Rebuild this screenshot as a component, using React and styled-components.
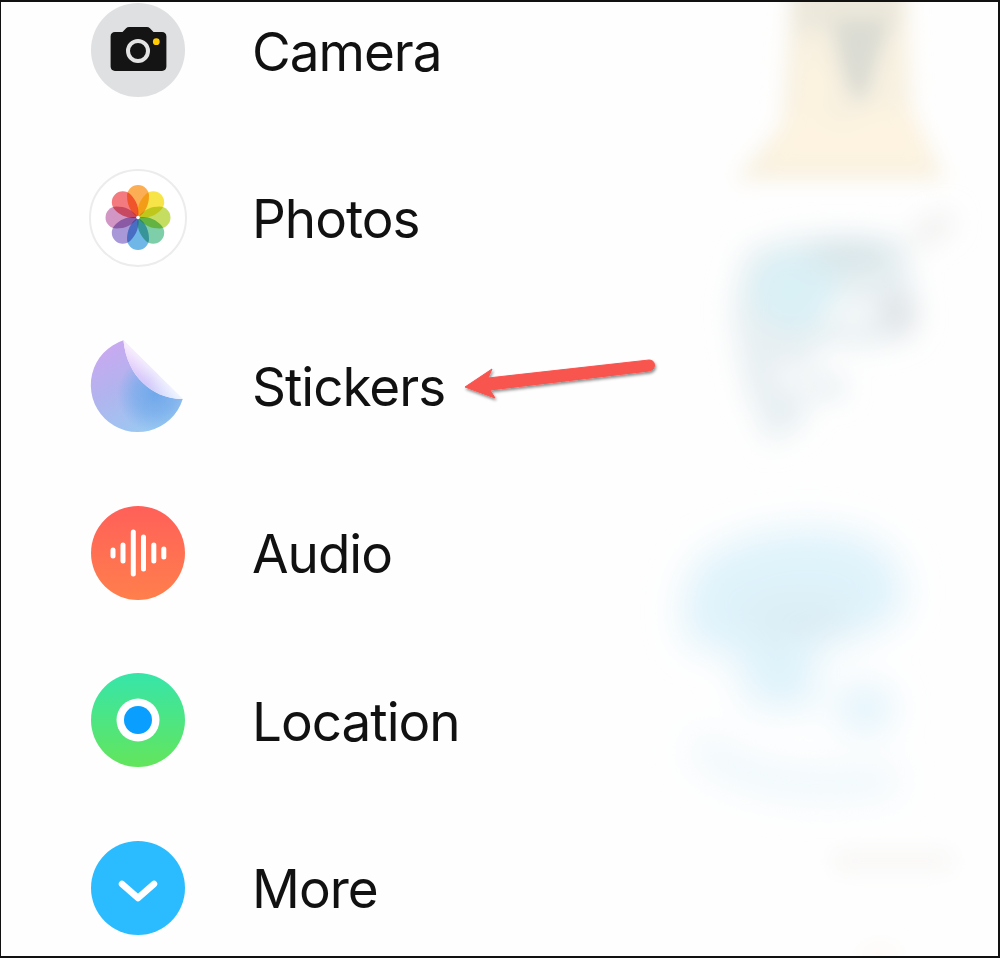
import React from 'react';
import styled, { createGlobalStyle } from 'styled-components';

const Global = createGlobalStyle`
  html, body {
    margin: 0;
    padding: 0;
    background: #fff;
  }
`;

const Frame = styled.div`
  position: relative;
  box-sizing: border-box;
  width: 1000px;
  height: 958px;
  overflow: hidden;
  background: #fefefe;
  border: solid #111;
  border-width: 2px 2px 2px 1px;
`;

const Overlay = styled.svg`
  position: absolute;
  top: -2px;
  left: -1px;
  width: 1000px;
  height: 958px;
`;

const List = styled.ul`
  position: relative;
  list-style: none;
  margin: 0;
  padding: 1px 0 0 90px;
  display: flex;
  flex-direction: column;
  gap: 73.6px;
`;

const Row = styled.li`
  display: flex;
  align-items: center;
  gap: 67px;
  height: 94px;
`;

const Badge = styled.svg`
  flex: none;
  width: 94px;
  height: 94px;
  overflow: visible;
`;

const Label = styled.span`
  padding-top: 3px;
  font-family: Inter, "Liberation Sans", sans-serif;
  font-size: 53px;
  font-weight: 400;
  letter-spacing: -1px;
  color: #111;
`;

const petalColors = ['#fba33c', '#f6e12e', '#bdda4c', '#6cc79d', '#5aade3', '#9d8ad2', '#cb87bb', '#f2686c'];

const CameraIcon = () => (
  <Badge viewBox="0 0 94 94">
    <circle cx="47" cy="47" r="47" fill="#dfe0e1" />
    <path
      d="M24 29h7.500l3.600-3.800c.8-.8 1.800-1.200 3-1.200h17.800c1.200 0 2.200.4 3 1.200l3.600 3.800H71c2.600 0 4.400 1.800 4.400 4.400v30.200c0 2.600-1.800 4.400-4.400 4.400H24c-2.600 0-4.400-1.800-4.400-4.400V33.400c0-2.600 1.800-4.400 4.400-4.400z"
      fill="#141414"
    />
    <circle cx="47" cy="48" r="10" fill="none" stroke="#e3e3e3" strokeWidth="4" />
    <circle cx="65.300" cy="38.700" r="3.400" fill="#ffcb00" />
  </Badge>
);

const PhotosIcon = () => (
  <Badge viewBox="0 0 94 94">
    <circle cx="47" cy="47" r="48" fill="#fff" stroke="#ececec" strokeWidth="2" />
    <g style={{ isolation: 'isolate' }}>
      {petalColors.map((color, i) => (
        <path
          key={color}
          d="M47 46.500C39 41 36 33 36 25A11 11 0 0 1 58 25C58 33 55 41 47 46.500Z"
          fill={color}
          opacity="0.88"
          transform={`rotate(${i * 45} 47 46.500)`}
          style={{ mixBlendMode: 'multiply' }}
        />
      ))}
    </g>
    <circle cx="47" cy="46.500" r="1.800" fill="#fff" />
  </Badge>
);

const StickerIcon = () => (
  <Badge viewBox="0 0 94 94">
    <defs>
      <linearGradient id="stickerBody" x1="0.15" y1="0.1" x2="0.6" y2="1">
        <stop offset="0" stopColor="#c8a9f1" />
        <stop offset="0.45" stopColor="#b1b4ee" />
        <stop offset="1" stopColor="#9ac9f2" />
      </linearGradient>
      <radialGradient id="stickerShade" gradientUnits="userSpaceOnUse" cx="64" cy="56" r="38">
        <stop offset="0" stopColor="#6aa6ea" stopOpacity="0.9" />
        <stop offset="0.55" stopColor="#6aa8ea" stopOpacity="0.55" />
        <stop offset="1" stopColor="#6aa8ea" stopOpacity="0" />
      </radialGradient>
      <linearGradient id="stickerFlap" gradientUnits="userSpaceOnUse" x1="36" y1="8" x2="88" y2="60">
        <stop offset="0" stopColor="#edd2fb" />
        <stop offset="0.55" stopColor="#d4c9fa" />
        <stop offset="1" stopColor="#d3e4ff" />
      </linearGradient>
      <linearGradient id="stickerGloss" gradientUnits="userSpaceOnUse" x1="64" y1="30" x2="52" y2="42">
        <stop offset="0" stopColor="#fff" stopOpacity="0.75" />
        <stop offset="1" stopColor="#fff" stopOpacity="0" />
      </linearGradient>
    </defs>
    <path
      d="M32.500 2.300A47 47 0 1 0 91.700 61C75 61 61 54 52 45 42 36 34 20 32.500 2.300Z"
      fill="url(#stickerBody)"
    />
    <path
      d="M32.500 2.300A47 47 0 1 0 91.700 61C75 61 61 54 52 45 42 36 34 20 32.500 2.300Z"
      fill="url(#stickerShade)"
    />
    <path d="M32.500 2.300 91.700 61C75 61 61 54 52 45 42 36 34 20 32.500 2.300Z" fill="url(#stickerFlap)" />
    <path d="M32.500 2.300 91.700 61C75 61 61 54 52 45 42 36 34 20 32.500 2.300Z" fill="url(#stickerGloss)" />
  </Badge>
);

const audioBars = [
  { x: 19.500, h: 11 },
  { x: 29.500, h: 21 },
  { x: 39.800, h: 47 },
  { x: 50, h: 37 },
  { x: 60.300, h: 21 },
  { x: 70.300, h: 13 },
];

const AudioIcon = () => (
  <Badge viewBox="0 0 94 94">
    <defs>
      <linearGradient id="audioFill" x1="0" y1="0" x2="0" y2="1">
        <stop offset="0" stopColor="#ff6059" />
        <stop offset="1" stopColor="#ff7f4c" />
      </linearGradient>
    </defs>
    <circle cx="47" cy="47" r="47" fill="url(#audioFill)" />
    {audioBars.map((bar) => (
      <rect key={bar.x} x={bar.x} y={47 - bar.h / 2} width="5" height={bar.h} rx="2.500" fill="#fff" />
    ))}
  </Badge>
);

const LocationIcon = () => (
  <Badge viewBox="0 0 94 94">
    <defs>
      <linearGradient id="locationFill" x1="0" y1="0" x2="0" y2="1">
        <stop offset="0" stopColor="#37e5aa" />
        <stop offset="1" stopColor="#63e55c" />
      </linearGradient>
    </defs>
    <circle cx="47" cy="47" r="47" fill="url(#locationFill)" />
    <circle cx="47" cy="47" r="21.500" fill="#fff" />
    <circle cx="47" cy="47" r="14" fill="#0a9fff" />
  </Badge>
);

const MoreIcon = () => (
  <Badge viewBox="0 0 94 94">
    <circle cx="47" cy="47" r="47" fill="#2bbcff" />
    <path d="M31 43 47 57 63 43" fill="none" stroke="#fff" strokeWidth="6.500" strokeLinecap="round" strokeLinejoin="round" />
  </Badge>
);

const items = [
  { label: 'Camera', Icon: CameraIcon },
  { label: 'Photos', Icon: PhotosIcon },
  { label: 'Stickers', Icon: StickerIcon },
  { label: 'Audio', Icon: AudioIcon },
  { label: 'Location', Icon: LocationIcon },
  { label: 'More', Icon: MoreIcon },
];

export default function App() {
  return (
    <>
      <Global />
      <Frame>
        <Overlay viewBox="0 0 1000 958">
          <defs>
            <filter id="softBlur" x="-30%" y="-30%" width="160%" height="160%">
              <feGaussianBlur stdDeviation="10" />
            </filter>
            <filter id="midBlur" x="-30%" y="-30%" width="160%" height="160%">
              <feGaussianBlur stdDeviation="14" />
            </filter>
            <filter id="wideBlur" x="-30%" y="-30%" width="160%" height="160%">
              <feGaussianBlur stdDeviation="18" />
            </filter>
          </defs>
          {/* blurred chat content behind the sheet */}
          <g filter="url(#softBlur)">
            <path d="M792 -20 L906 -20 L912 110 L945 180 L735 180 L782 125 Z" fill="#f8f1e1" />
            <path d="M790 -20 L906 -20 L900 25 L795 35 Z" fill="#ece8db" />
            <path d="M832 20 L892 20 L878 60 L866 100 L852 100 L838 60 Z" fill="#dadbd3" />
            <path d="M795 105 L845 125 L870 110 L912 110 L930 168 L765 168 Z" fill="#fdf3e0" />
            <ellipse cx="815" cy="85" rx="14" ry="28" fill="#fcf3e0" />
          </g>
          <g filter="url(#midBlur)">
            <path d="M745 252 Q800 225 905 240 L918 325 L880 345 L815 345 L805 420 L770 445 L745 385 L732 310 Z" fill="#e7eff2" />
            <ellipse cx="795" cy="290" rx="44" ry="40" fill="#d9f0f5" />
            <ellipse cx="850" cy="255" rx="42" ry="14" fill="#d6e4e8" />
            <ellipse cx="900" cy="315" rx="14" ry="24" fill="#dde1e4" />
            <ellipse cx="850" cy="312" rx="30" ry="10" fill="#fbfcfc" />
            <ellipse cx="790" cy="377" rx="14" ry="14" fill="#fbfbfc" />
            <ellipse cx="830" cy="387" rx="15" ry="11" fill="#e1ebef" />
            <path d="M915 240 L950 218" stroke="#e8e8e6" strokeWidth="14" />
          </g>
          <g filter="url(#wideBlur)">
            <path d="M700 560 Q770 515 860 535 Q915 560 900 615 Q860 640 815 650 L815 708 L750 705 L735 655 L690 645 Q672 600 700 560 Z" fill="#dff3fb" />
            <ellipse cx="800" cy="618" rx="55" ry="14" fill="#d9e9f0" />
            <ellipse cx="865" cy="708" rx="26" ry="22" fill="#dcf2fb" />
            <path d="M705 750 Q760 795 885 780" fill="none" stroke="#eef8fc" strokeWidth="30" strokeLinecap="round" />
          </g>
          <g filter="url(#softBlur)">
            <rect x="832" y="850" width="122" height="22" rx="8" fill="#f9f8f7" />
            <ellipse cx="880" cy="955" rx="18" ry="7" fill="#fff6f2" />
          </g>
        </Overlay>
        <List>
          {items.map(({ label, Icon }) => (
            <Row key={label}>
              <Icon />
              <Label>{label}</Label>
            </Row>
          ))}
        </List>
        <Overlay viewBox="0 0 1000 958">
          <defs>
            <filter id="arrowShadow" x="-10%" y="-30%" width="120%" height="170%">
              <feDropShadow dx="1" dy="2" stdDeviation="1.500" floodColor="#000" floodOpacity="0.45" />
            </filter>
          </defs>
          <path
            d="M465 387 L492 369 L488 378 L649 360 Q654 360 654.500 365 Q654.500 370 649 371 L490 390 L495 398 Z"
            fill="#f9544f"
            stroke="#f9544f"
            strokeWidth="1"
            strokeLinejoin="round"
            filter="url(#arrowShadow)"
          />
        </Overlay>
      </Frame>
    </>
  );
}
